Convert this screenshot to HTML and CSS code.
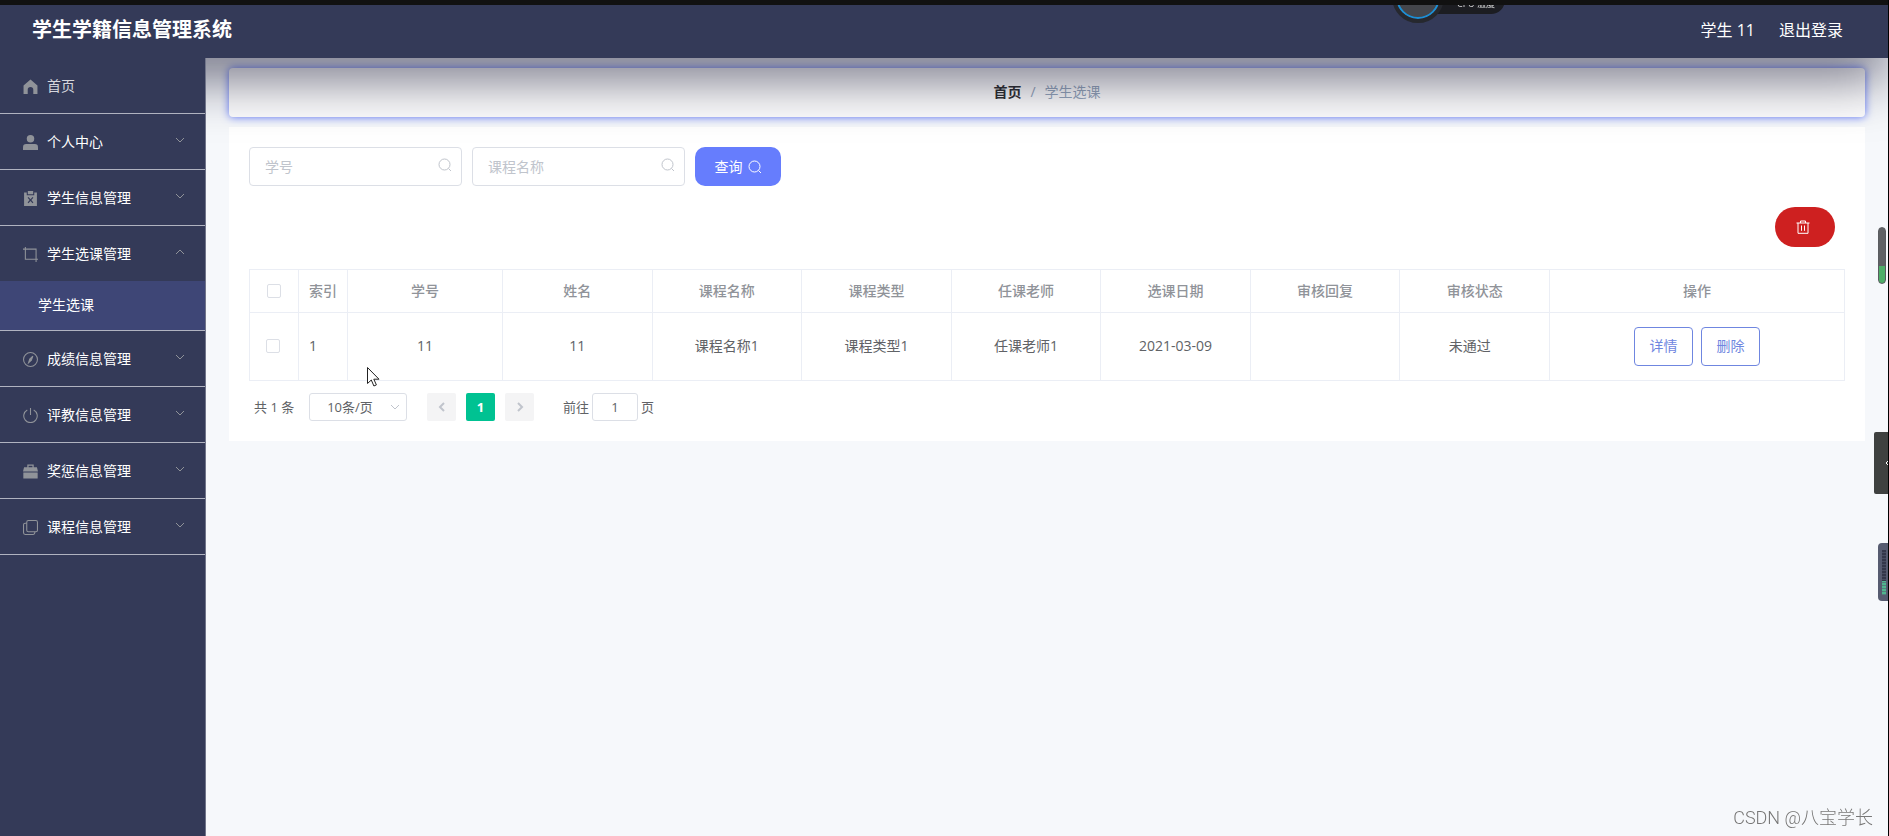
FILE: index.html
```html
<!DOCTYPE html>
<html lang="zh-CN">
<head>
  <meta charset="UTF-8">
  <title>学生学籍信息管理系统</title>
  <meta name="viewport" content="width=device-width, initial-scale=1.0">
  <link rel="stylesheet" href="styles.css">
</head>
<body>
  <header class="header">
    <h1 class="title">学生学籍信息管理系统</h1>
    <div class="user">
      <span>学生 11</span>
      <a href="#">退出登录</a>
    </div>
  </header>

  <div class="container">
    <nav class="sidebar">
      <ul class="menu">
        <li>
          <a href="#" class="menu-item home">
            <svg class="icon" viewBox="0 0 14 14"><path fill="currentColor" d="M7 .5 13.500 6v8H9.600V10a2.600 2.600 0 0 0-5.200 0v4H.5V6z"/></svg>
            <span>首页</span>
          </a>
        </li>
        <li>
          <a href="#" class="menu-item">
            <svg class="icon" viewBox="0 0 14 14"><circle cx="7" cy="3.500" r="3.500" fill="currentColor"/><path fill="currentColor" d="M0 14v-2.500Q0 8.500 3 8.500h8q3 0 3 3V14z"/></svg>
            <span>个人中心</span>
            <svg class="arrow" viewBox="0 0 12 12"><path d="M2 4l4 4 4-4"/></svg>
          </a>
        </li>
        <li>
          <a href="#" class="menu-item">
            <svg class="icon" viewBox="0 0 14 14"><path fill="currentColor" fill-rule="evenodd" d="M1 1.500h2.500V4h7V1.500H13V14H1zM4.500 0h5v3h-5zM4.300 6.300 6.200 8.500 4.300 10.700l.8.700L7 9.300l1.900 2.100.8-.7-1.900-2.200 1.900-2.200-.8-.7L7 7.700 5.100 5.600z"/></svg>
            <span>学生信息管理</span>
            <svg class="arrow" viewBox="0 0 12 12"><path d="M2 4l4 4 4-4"/></svg>
          </a>
        </li>
        <li>
          <a href="#" class="menu-item">
            <svg class="icon line" viewBox="0 0 14 14"><path d="M0 2h12.200v12M2.200 0v11.500H14"/></svg>
            <span>学生选课管理</span>
            <svg class="arrow" viewBox="0 0 12 12"><path d="M2 8l4-4 4 4"/></svg>
          </a>
          <a href="#" class="submenu-item">学生选课</a>
        </li>
        <li>
          <a href="#" class="menu-item">
            <svg class="icon line" viewBox="0 0 14 14"><circle cx="7" cy="7" r="6.500"/><path fill="currentColor" d="M9.200 3.800 6.300 6.600 5.200 10l2.600-2.300z"/></svg>
            <span>成绩信息管理</span>
            <svg class="arrow" viewBox="0 0 12 12"><path d="M2 4l4 4 4-4"/></svg>
          </a>
        </li>
        <li>
          <a href="#" class="menu-item">
            <svg class="icon line" viewBox="0 0 14 14"><path d="M7 0v6.500M4 1.800a6.300 6.300 0 1 0 6 0"/></svg>
            <span>评教信息管理</span>
            <svg class="arrow" viewBox="0 0 12 12"><path d="M2 4l4 4 4-4"/></svg>
          </a>
        </li>
        <li>
          <a href="#" class="menu-item">
            <svg class="icon" viewBox="0 0 14 14"><path fill="currentColor" fill-rule="evenodd" d="M4 .5h6V3h3l1 4H0l1-4h3zm1.200 1.200V3h3.600V1.700zM.3 8h13.400v5.500H.3z"/></svg>
            <span>奖惩信息管理</span>
            <svg class="arrow" viewBox="0 0 12 12"><path d="M2 4l4 4 4-4"/></svg>
          </a>
        </li>
        <li>
          <a href="#" class="menu-item">
            <svg class="icon line" viewBox="0 0 14 14"><rect x="3.500" y=".5" width="10" height="10.500" rx="1.500"/><path d="M3.500 3H2Q.5 3 .5 4.500V12Q.5 13.500 2 13.500h7.500q1.500 0 1.500-1.500v-1"/></svg>
            <span>课程信息管理</span>
            <svg class="arrow" viewBox="0 0 12 12"><path d="M2 4l4 4 4-4"/></svg>
          </a>
        </li>
      </ul>
    </nav>

    <main class="main">
      <div class="breadcrumb">
        <a href="#">首页</a>
        <span class="separator">/</span>
        <span>学生选课</span>
      </div>

      <section class="panel">
        <form class="search">
          <div class="field">
            <input type="text" placeholder="学号" aria-label="学号">
            <svg class="search-icon" viewBox="0 0 14 14"><circle cx="6.500" cy="6.500" r="5.500"/><path d="M10.500 10.500 13 13"/></svg>
          </div>
          <div class="field">
            <input type="text" placeholder="课程名称" aria-label="课程名称">
            <svg class="search-icon" viewBox="0 0 14 14"><circle cx="6.500" cy="6.500" r="5.500"/><path d="M10.500 10.500 13 13"/></svg>
          </div>
          <button type="button" class="btn-query">查询
            <svg class="search-icon" viewBox="0 0 14 14"><circle cx="6.500" cy="6.500" r="5.500"/><path d="M10.500 10.500 13 13"/></svg>
          </button>
        </form>

        <div class="toolbar">
          <button type="button" class="btn-trash" aria-label="删除">
            <svg viewBox="0 0 14 14"><path d="M.5 3h13M4.500 3V1h5v2M2 3v10.300h10V3M5.500 5.500v5.300M8.500 5.500v5.300"/></svg>
          </button>
        </div>

        <table class="table">
          <colgroup>
            <col class="col-small"><col class="col-small"><col class="col-id">
            <col span="7">
            <col class="col-action">
          </colgroup>
          <thead>
            <tr>
              <th><input type="checkbox" aria-label="全选"></th>
              <th class="left">索引</th>
              <th>学号</th>
              <th>姓名</th>
              <th>课程名称</th>
              <th>课程类型</th>
              <th>任课老师</th>
              <th>选课日期</th>
              <th>审核回复</th>
              <th>审核状态</th>
              <th>操作</th>
            </tr>
          </thead>
          <tbody>
            <tr>
              <td class="check"><input type="checkbox" aria-label="选择第 1 行"></td>
              <td class="left">1</td>
              <td>11</td>
              <td>11</td>
              <td>课程名称1</td>
              <td>课程类型1</td>
              <td>任课老师1</td>
              <td>2021-03-09</td>
              <td></td>
              <td class="status">未通过</td>
              <td>
                <div class="actions">
                  <button type="button">详情</button>
                  <button type="button">删除</button>
                </div>
              </td>
            </tr>
          </tbody>
        </table>

        <div class="pagination">
          <span class="total">共 1 条</span>
          <div class="sizes">
            <select aria-label="每页条数">
              <option>10条/页</option>
              <option>20条/页</option>
            </select>
            <svg class="arrow" viewBox="0 0 12 12"><path d="M2 4l4 4 4-4"/></svg>
          </div>
          <div class="pager">
            <button type="button" disabled aria-label="上一页"><svg viewBox="0 0 12 12"><path d="M8 2 4 6l4 4"/></svg></button>
            <button type="button" class="active">1</button>
            <button type="button" disabled aria-label="下一页"><svg viewBox="0 0 12 12"><path d="M4 2l4 4-4 4"/></svg></button>
          </div>
          <label class="jump">前往 <input type="text" value="1"> 页</label>
        </div>
      </section>
    </main>
  </div>

  <!-- 桌面悬浮组件 -->
  <div class="screen-top"></div>
  <div class="screen-right"></div>
  <div class="monitor">
    <div class="monitor-pill"></div>
    <div class="monitor-dial"></div>
  </div>
  <div class="monitor-label">CPU 温度</div>
  <div class="meter-top"></div>
  <div class="drawer-tab"><svg viewBox="0 0 6 8"><path d="M5 1 2 4l3 3"/></svg></div>
  <div class="meter-box"><div class="meter-bars"></div></div>
  <svg class="cursor" viewBox="0 0 13 20"><path d="M.5.5v16l3.800-3.500 2.600 6 2.500-1.100-2.600-5.700H12z"/></svg>
  <div class="watermark">CSDN @八宝学长</div>
</body>
</html>
```
FILE: styles.css
```css
* {
  box-sizing: border-box;
}

body {
  margin: 0;
  padding-top: 5px;
  min-height: 100vh;
  display: flex;
  flex-direction: column;
  background: #f6f8fb;
  color: #606266;
  font-family: "Open Sans", "Noto Sans CJK SC", sans-serif;
  font-size: 14px;
  line-height: 20px;
}

a {
  color: inherit;
  text-decoration: none;
}

button,
input,
select {
  font: inherit;
  color: inherit;
}

button {
  cursor: pointer;
}

svg {
  display: block;
  fill: none;
  stroke: none;
}

/* 顶部 */
.header {
  position: relative;
  z-index: 1;
  display: flex;
  align-items: center;
  justify-content: space-between;
  height: 53px;
  padding: 0 46px 4px 32px;
  background: #343a58;
  box-shadow: 0 18px 56px rgba(10, 10, 40, 0.66);
  color: #fff;
}

.title {
  margin: 0;
  font-size: 20px;
  line-height: 28px;
}

.user {
  display: flex;
  gap: 24px;
  font-size: 16px;
}

.container {
  flex: 1;
  display: flex;
}

/* 侧边栏 */
.sidebar {
  position: relative;
  z-index: 2;
  flex: none;
  width: 206px;
  background: #343a58;
  border-right: 1px solid #71758a;
  color: #fff;
}

.menu {
  margin: 0;
  padding: 0;
  list-style: none;
}

.menu li {
  border-bottom: 1px solid #b0b3c0;
}

.menu-item {
  display: flex;
  align-items: center;
  gap: 9px;
  height: 55px;
  padding: 0 19px 0 23px;
}

.menu-item.home {
  color: #d5d6dd;
}

.icon {
  width: 15px;
  height: 15px;
  margin-top: 2px;
  color: #909399;
}

.icon.line {
  stroke: #909399;
}

.arrow {
  width: 12px;
  height: 12px;
  stroke: #909399;
}

.menu-item .arrow {
  margin: 0 0 4px auto;
}

.submenu-item {
  display: block;
  height: 49px;
  padding-left: 38px;
  background: #3e4676;
  line-height: 48px;
}

/* 内容区 */
.main {
  flex: 1;
  min-width: 0;
  padding: 10px 24px 20px 23px;
}

.breadcrumb {
  display: flex;
  align-items: center;
  justify-content: center;
  height: 49px;
  margin-bottom: 10px;
  padding-bottom: 1px;
  background: #fff;
  border-radius: 4px;
  box-shadow: 0 0 8px #5f78ff;
  color: #97a8be;
}

.breadcrumb a {
  color: #303133;
  font-weight: bold;
}

.separator {
  margin: 0 9px;
}

.panel {
  padding: 20px;
  background: #fff;
}

.search {
  display: flex;
  gap: 10px;
}

.field {
  position: relative;
  width: 213px;
}

.field input {
  display: block;
  width: 100%;
  height: 39px;
  padding: 0 30px 1px 15px;
  border: 1px solid #dcdfe6;
  border-radius: 4px;
  background: #fff;
}

.field input::placeholder {
  color: #c0c4cc;
}

.search-icon {
  width: 14px;
  height: 14px;
  stroke: currentColor;
}

.field .search-icon {
  position: absolute;
  top: 11px;
  right: 10px;
  color: #c0c4cc;
}

.btn-query {
  display: flex;
  align-items: center;
  justify-content: center;
  gap: 5px;
  width: 86px;
  height: 39px;
  border: 0;
  border-radius: 10px;
  background: #667dfd;
  color: #fff;
}

.toolbar {
  display: flex;
  justify-content: flex-end;
  padding: 21px 10px 22px;
}

.btn-trash {
  display: flex;
  align-items: center;
  justify-content: center;
  width: 60px;
  height: 40px;
  padding: 0 4px 0 0;
  border: 0;
  border-radius: 20px;
  background: #ce2020;
}

.btn-trash svg {
  width: 14px;
  height: 14px;
  stroke: #fff;
}

/* 表格 */
.table {
  width: 100%;
  table-layout: fixed;
  border-collapse: collapse;
}

.col-small {
  width: 49px;
}

.col-id {
  width: 155px;
}

.col-action {
  width: 295px;
}

.table th,
.table td {
  padding: 0 10px 1px;
  border: 1px solid #ebeef5;
  text-align: center;
}

.table th {
  height: 43px;
  color: #909399;
  font-weight: 500;
}

.table td {
  height: 68px;
}

.table .left {
  text-align: left;
}

.table .check {
  padding-right: 13px;
}

.table .status {
  padding-right: 20px;
}

.table input {
  appearance: none;
  display: block;
  width: 14px;
  height: 14px;
  margin: 0 auto;
  border: 1px solid #dcdfe6;
  border-radius: 2px;
  background: #fff;
}

.actions {
  display: flex;
  justify-content: center;
  gap: 8px;
}

.actions button {
  width: 59px;
  height: 39px;
  padding: 0;
  border: 1px solid #6f86e0;
  border-radius: 4px;
  background: #fff;
  color: #6f86e0;
}

/* 分页 */
.pagination {
  display: flex;
  align-items: center;
  height: 28px;
  margin-top: 12px;
  padding-left: 5px;
  font-size: 13px;
}

.total {
  width: 55px;
}

.sizes {
  position: relative;
  width: 98px;
}

.sizes select {
  appearance: none;
  display: block;
  width: 100%;
  height: 28px;
  padding: 0 20px 0 4px;
  border: 1px solid #dcdfe6;
  border-radius: 3px;
  background: #fff;
  text-align: center;
  text-align-last: center;
}

.sizes .arrow {
  position: absolute;
  top: 8px;
  right: 6px;
  stroke: #c0c4cc;
}

.pager {
  display: flex;
  gap: 10px;
  margin: 0 29px 0 20px;
}

.pager button {
  display: flex;
  align-items: center;
  justify-content: center;
  width: 29px;
  height: 28px;
  padding: 0;
  border: 0;
  border-radius: 2px;
  background: #f4f4f5;
}

.pager svg {
  width: 12px;
  height: 12px;
  stroke: #c0c4cc;
  stroke-width: 2;
}

.pager .active {
  background: #00c292;
  color: #fff;
  font-weight: bold;
}

.jump {
  display: flex;
  align-items: center;
  gap: 3px;
}

.jump input {
  width: 46px;
  height: 28px;
  padding: 0;
  border: 1px solid #dcdfe6;
  border-radius: 3px;
  text-align: center;
}

/* 悬浮组件 */
.screen-top {
  position: fixed;
  z-index: 20;
  top: 0;
  left: 0;
  right: 0;
  height: 5px;
  background: #111;
}

.screen-right {
  position: fixed;
  z-index: 20;
  top: 0;
  right: 0;
  bottom: 0;
  width: 1px;
  background: #000;
}

.monitor {
  position: fixed;
  z-index: 10;
  top: -29px;
  right: 384px;
  width: 113px;
  height: 52px;
}

.monitor-pill {
  position: absolute;
  top: 15px;
  left: 26px;
  right: 0;
  height: 28px;
  border-radius: 0 14px 14px 0;
  background: #1c1d22;
}

.monitor-label {
  position: fixed;
  z-index: 10;
  top: 0;
  right: 394px;
  color: #ddd;
  font-size: 9px;
  line-height: 8px;
}

.monitor-dial {
  position: absolute;
  top: 0;
  left: 0;
  width: 52px;
  height: 52px;
  border: 4px solid #26282e;
  border-radius: 50%;
  background: #44464c;
  box-shadow: inset 0 0 0 2px #1c8fd6;
}

.meter-top {
  position: fixed;
  z-index: 10;
  top: 227px;
  right: 3px;
  width: 8px;
  height: 57px;
  border-radius: 4px;
  border: 1px solid #5a5c60;
  background: linear-gradient(#5f6164 38px, #4fae68 38px);
}

.drawer-tab {
  position: fixed;
  z-index: 10;
  top: 432px;
  right: 1px;
  width: 14px;
  height: 62px;
  padding: 27px 0 0 10px;
  overflow: hidden;
  border-radius: 2px 0 0 2px;
  background: #3f4140;
}

.drawer-tab svg {
  width: 6px;
  height: 8px;
  stroke: #fff;
}

.meter-box {
  position: fixed;
  z-index: 10;
  top: 543px;
  right: 1px;
  width: 10px;
  height: 58px;
  padding: 7px 2px 6px 4px;
  border-radius: 4px 0 0 4px;
  background: #565b70;
}

.meter-bars {
  height: 45px;
  background:
    repeating-linear-gradient(transparent 0 2px, rgba(86, 91, 112, 0.6) 2px 3px),
    linear-gradient(#34374a 31px, #4fb58e 31px);
}

.cursor {
  position: fixed;
  z-index: 10;
  top: 367px;
  left: 367px;
  width: 13px;
  height: 20px;
  fill: #fff;
  stroke: #222;
}

.watermark {
  position: fixed;
  z-index: 10;
  right: 16px;
  bottom: 6px;
  color: #777;
  font-family: Roboto, "Noto Sans CJK SC", sans-serif;
  font-size: 18px;
  font-weight: 300;
  line-height: 24px;
  text-shadow: 0 0 1px #fff;
}
```
